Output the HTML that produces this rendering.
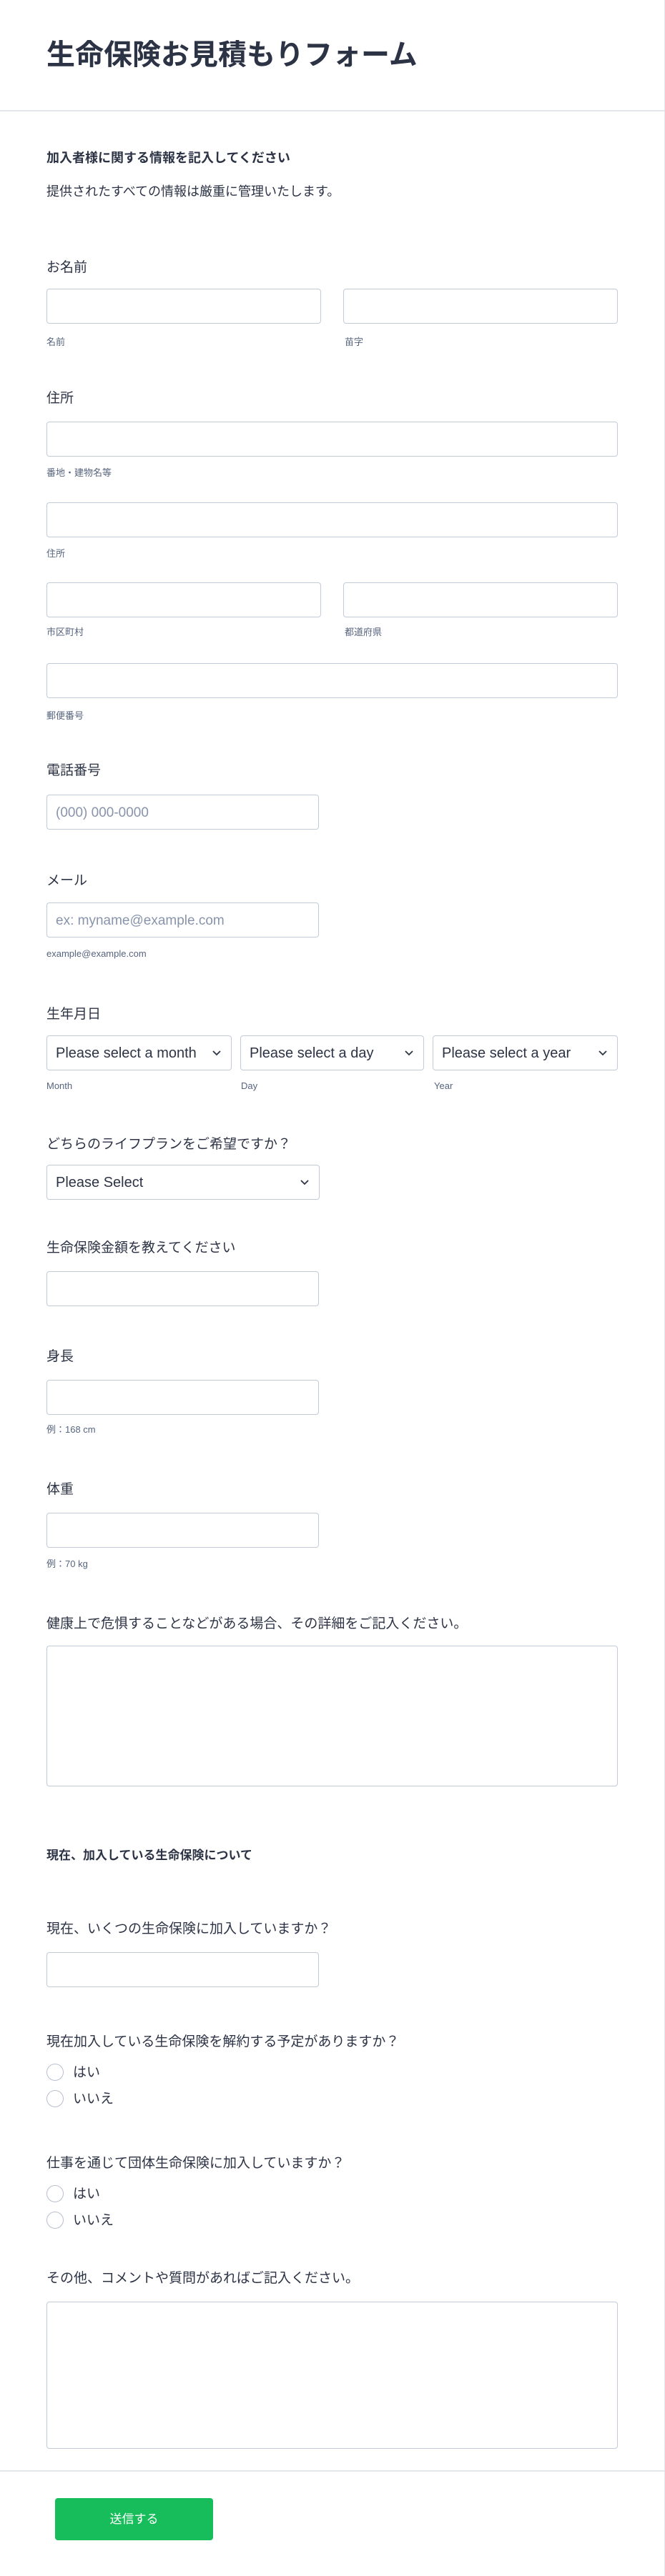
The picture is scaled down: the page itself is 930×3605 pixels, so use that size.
<!DOCTYPE html>
<html><head><meta charset="utf-8"><style>
*{box-sizing:border-box;margin:0;padding:0}
body{width:930px;height:3605px;background:#fff;position:relative;font-family:"Liberation Sans","Noto Sans CJK JP",sans-serif;color:#2c3345;overflow:hidden;border-right:1px solid #e3e6ec}
.a{position:absolute}
.t{position:absolute;left:65px;white-space:nowrap;line-height:1}
.lb{font-size:19px}
.sub{font-size:13px;color:#57647e}
.in{position:absolute;height:49px;border:1px solid #c3cad8;border-radius:4px;background:#fff}
.ph{font-size:19px;color:#8894ab;position:absolute;left:12px;top:15px;white-space:nowrap;line-height:1}
.sel{position:absolute;height:49px;border:1px solid #c3cad8;border-radius:4px;background:#fff;font-size:20px;color:#2c3345}
.sel span{position:absolute;left:12px;top:14px;line-height:1;white-space:nowrap}
.sel svg{position:absolute;right:14px;top:20px}
.ta{position:absolute;left:65px;width:799px;border:1px solid #c3cad8;border-radius:4px}
.rad{position:absolute;left:65px;width:24px;height:24px;border:1.5px solid #b8bfcd;border-radius:50%}
.rt{position:absolute;left:102px;font-size:19px;line-height:1}
</style></head><body>
<div class="t" style="top:57px;font-size:40px;font-weight:bold">生命保険お見積もりフォーム</div>
<div class="a" style="left:0;top:154px;width:930px;height:2px;background:#e3e6ec"></div>

<div class="t" style="top:212px;font-size:18px;font-weight:bold">加入者様に関する情報を記入してください</div>
<div class="t" style="top:259px;font-size:18px">提供されたすべての情報は厳重に管理いたします。</div>

<div class="t lb" style="top:365px">お名前</div>
<div class="in" style="left:65px;top:404px;width:384px"></div>
<div class="in" style="left:480px;top:404px;width:384px"></div>
<div class="t sub" style="top:472px">名前</div>
<div class="t sub" style="top:472px;left:482px">苗字</div>

<div class="t lb" style="top:548px">住所</div>
<div class="in" style="left:65px;top:590px;width:799px"></div>
<div class="t sub" style="top:655px">番地・建物名等</div>
<div class="in" style="left:65px;top:703px;width:799px"></div>
<div class="t sub" style="top:768px">住所</div>
<div class="in" style="left:65px;top:815px;width:384px"></div>
<div class="in" style="left:480px;top:815px;width:384px"></div>
<div class="t sub" style="top:878px">市区町村</div>
<div class="t sub" style="top:878px;left:482px">都道府県</div>
<div class="in" style="left:65px;top:928px;width:799px"></div>
<div class="t sub" style="top:995px">郵便番号</div>

<div class="t lb" style="top:1069px">電話番号</div>
<div class="in" style="left:65px;top:1112px;width:381px"><div class="ph">(000) 000-0000</div></div>

<div class="t lb" style="top:1223px">メール</div>
<div class="in" style="left:65px;top:1263px;width:381px"><div class="ph">ex: myname@example.com</div></div>
<div class="t sub" style="top:1328px">example@example.com</div>

<div class="t lb" style="top:1410px">生年月日</div>
<div class="sel" style="left:65px;top:1449px;width:259px"><span>Please select a month</span><svg width="12" height="8" viewBox="0 0 12 8"><path d="M1 1l5 5 5-5" fill="none" stroke="#2c3345" stroke-width="1.8"/></svg></div>
<div class="sel" style="left:336px;top:1449px;width:257px"><span>Please select a day</span><svg width="12" height="8" viewBox="0 0 12 8"><path d="M1 1l5 5 5-5" fill="none" stroke="#2c3345" stroke-width="1.8"/></svg></div>
<div class="sel" style="left:605px;top:1449px;width:259px"><span>Please select a year</span><svg width="12" height="8" viewBox="0 0 12 8"><path d="M1 1l5 5 5-5" fill="none" stroke="#2c3345" stroke-width="1.8"/></svg></div>
<div class="t sub" style="top:1513px">Month</div>
<div class="t sub" style="top:1513px;left:337px">Day</div>
<div class="t sub" style="top:1513px;left:607px">Year</div>

<div class="t lb" style="top:1592px">どちらのライフプランをご希望ですか？</div>
<div class="sel" style="left:65px;top:1630px;width:382px"><span>Please Select</span><svg width="12" height="8" viewBox="0 0 12 8"><path d="M1 1l5 5 5-5" fill="none" stroke="#2c3345" stroke-width="1.8"/></svg></div>

<div class="t lb" style="top:1737px">生命保険金額を教えてください</div>
<div class="in" style="left:65px;top:1779px;width:381px"></div>

<div class="t lb" style="top:1889px">身長</div>
<div class="in" style="left:65px;top:1931px;width:381px"></div>
<div class="t sub" style="top:1994px">例：168 cm</div>

<div class="t lb" style="top:2075px">体重</div>
<div class="in" style="left:65px;top:2117px;width:381px"></div>
<div class="t sub" style="top:2182px">例：70 kg</div>

<div class="t lb" style="top:2263px">健康上で危惧することなどがある場合、その詳細をご記入ください。</div>
<div class="ta" style="top:2303px;height:197px"></div>

<div class="t" style="top:2588px;font-size:17px;font-weight:bold">現在、加入している生命保険について</div>

<div class="t lb" style="top:2690px">現在、いくつの生命保険に加入していますか？</div>
<div class="in" style="left:65px;top:2732px;width:381px"></div>

<div class="t lb" style="top:2848px">現在加入している生命保険を解約する予定がありますか？</div>
<div class="rad" style="top:2888px"></div><div class="rt" style="top:2891px">はい</div>
<div class="rad" style="top:2925px"></div><div class="rt" style="top:2928px">いいえ</div>

<div class="t lb" style="top:3018px">仕事を通じて団体生命保険に加入していますか？</div>
<div class="rad" style="top:3058px"></div><div class="rt" style="top:3061px">はい</div>
<div class="rad" style="top:3095px"></div><div class="rt" style="top:3098px">いいえ</div>

<div class="t lb" style="top:3179px">その他、コメントや質問があればご記入ください。</div>
<div class="ta" style="top:3221px;height:206px"></div>

<div class="a" style="left:0;top:3457px;width:930px;height:2px;background:#e3e6ec"></div>
<div class="a" style="left:77px;top:3496px;width:221px;height:59px;background:#18bd5b;border-radius:4px;color:#fff;font-size:17px;text-align:center;line-height:59px">送信する</div>
</body></html>
